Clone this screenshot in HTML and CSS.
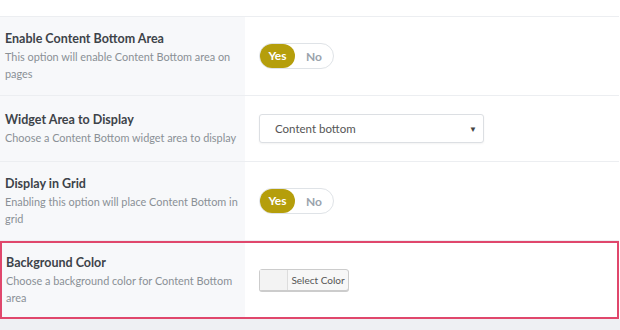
FILE: index.html
```html
<!DOCTYPE html>
<html>
  <head>
    <title>Content Bottom</title>
    <link rel="stylesheet" href="styles.css">
  </head>
  <body>
    <div class="page">
      <div class="options">
        <div class="option-row">
          <div class="option-label">
            <h4>Enable Content Bottom Area</h4>
            <p>This option will enable Content Bottom area on pages</p>
          </div>
          <div class="option-control">
            <div class="switch">
              <span class="switch-on">Yes</span>
              <span class="switch-off">No</span>
            </div>
          </div>
        </div>

        <div class="option-row">
          <div class="option-label">
            <h4>Widget Area to Display</h4>
            <p>Choose a Content Bottom widget area to display</p>
          </div>
          <div class="option-control">
            <div class="select-box">
              <span>Content bottom</span>
              <span class="select-arrow">&#9660;</span>
            </div>
          </div>
        </div>

        <div class="option-row">
          <div class="option-label">
            <h4>Display in Grid</h4>
            <p>Enabling this option will place Content Bottom in grid</p>
          </div>
          <div class="option-control">
            <div class="switch">
              <span class="switch-on">Yes</span>
              <span class="switch-off">No</span>
            </div>
          </div>
        </div>

        <div class="option-row highlighted">
          <div class="option-label">
            <h4>Background Color</h4>
            <p>Choose a background color for Content Bottom area</p>
          </div>
          <div class="option-control">
            <div class="color-button">
              <span class="color-swatch"></span>
              <span class="color-text">Select Color</span>
            </div>
          </div>
        </div>
      </div>
    </div>
  </body>
</html>
```

FILE: styles.css
```css
body {
  margin: 0;
  font-family: Lato, "Open Sans", sans-serif;
  background-color: #eef0f3;
}

.page {
  padding-top: 16px;
  background-color: #fff;
}

.options {
  border-top: 1px solid #eceef1;
  margin-right: 1px;
}

.option-row {
  display: flex;
  border-bottom: 1px solid #eceef1;
  background-color: #fff;
}

.option-row.highlighted {
  border-bottom: none;
  box-shadow: inset 0 0 0 2px #e0476c;
}

.option-label {
  width: 245px;
  box-sizing: border-box;
  padding: 13px 4px 13px 5px;
  background-color: #f7f8fa;
  display: flex;
  flex-direction: column;
  justify-content: center;
}

.highlighted .option-label {
  margin: 2px 0 2px 2px;
  padding: 11px 4px 11px 4px;
  width: 243px;
}

.option-label h4 {
  margin: 0;
  font-size: 12.5px;
  line-height: 18px;
  font-weight: bold;
  color: #3d4349;
}

.option-label p {
  margin: 0;
  font-size: 10.9px;
  line-height: 17px;
  color: #8a9096;
}

.option-control {
  flex: 1;
  padding: 18px 14px;
  display: flex;
  align-items: center;
}

.switch {
  display: flex;
  align-items: center;
  width: 75px;
  height: 26px;
  box-sizing: border-box;
  border: 1px solid #dfe3e7;
  border-radius: 13px;
  background-color: #fff;
}

.switch-on {
  width: 35px;
  height: 24px;
  line-height: 24px;
  border-radius: 12px;
  background-color: #b59e0b;
  color: #fff;
  font-size: 12px;
  font-weight: bold;
  text-align: center;
}

.switch-off {
  flex: 1;
  text-align: center;
  color: #9aa3ac;
  font-size: 12px;
  font-weight: bold;
}

.select-box {
  display: flex;
  align-items: center;
  justify-content: space-between;
  width: 225px;
  height: 29px;
  box-sizing: border-box;
  padding: 0 6px 0 15px;
  border: 1px solid #dcdfe3;
  border-radius: 3px;
  background-color: #fff;
  box-shadow: 0 1px 2px rgba(0, 0, 0, 0.05);
  font-size: 11.5px;
  color: #555;
}

.select-arrow {
  font-size: 8px;
  color: #444;
}

.color-button {
  display: flex;
  width: 90px;
  height: 22px;
  box-sizing: border-box;
  border: 1px solid #ccc;
  border-radius: 3px;
  background-color: #f7f7f7;
  box-shadow: 0 1px 0 #ccc;
}

.color-swatch {
  width: 27px;
  border-right: 1px solid #ddd;
  background-color: #f3f3f3;
}

.color-text {
  flex: 1;
  line-height: 20px;
  font-size: 10px;
  color: #555;
  text-align: center;
}
```
